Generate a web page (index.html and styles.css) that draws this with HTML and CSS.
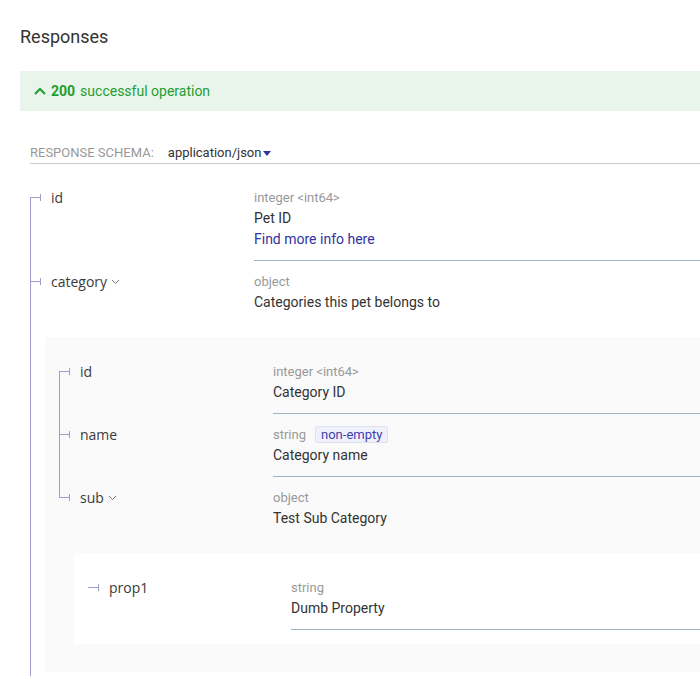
FILE: index.html
```html
<!DOCTYPE html>
<html lang="en">
<head>
<meta charset="utf-8">
<title>Responses</title>
<link rel="stylesheet" href="styles.css">
</head>
<body>
<div class="page">
  <h2 class="title">Responses</h2>
  <div class="response-ok">
    <svg class="up" width="12" height="8" viewBox="0 0 12 8"><path d="M1 7 L6 2 L11 7" fill="none" stroke="currentColor" stroke-width="2"/></svg>
    <strong>200</strong><span class="resp-desc">successful operation</span>
  </div>
  <div class="schema-bar">
    <span class="schema-label">Response Schema:</span>
    <span class="schema-type">application/json</span>
    <svg class="caret" width="8" height="5" viewBox="0 0 8 5"><path d="M0 0 H8 L4 5 Z" fill="#32329f"/></svg>
  </div>

  <div class="tree lvl0">
    <div class="prop first">
      <div class="name"><div class="nline"><span class="bullet"></span><span class="pname">id</span></div></div>
      <div class="detail bordered">
        <div class="type">integer &lt;int64&gt;</div>
        <div class="desc">Pet ID</div>
        <div class="desc"><a class="link" href="#">Find more info here</a></div>
      </div>
    </div>
    <div class="prop">
      <div class="name"><div class="nline"><span class="bullet"></span><span class="pname">category</span><svg class="chev" width="9" height="6" viewBox="0 0 9 6"><path d="M1 1 L4.5 4.5 L8 1" fill="none" stroke="#777" stroke-width="1"/></svg></div></div>
      <div class="detail">
        <div class="type">object</div>
        <div class="desc">Categories this pet belongs to</div>
      </div>
    </div>
    <div class="nest-row line">
      <div class="nest-box grey">
        <div class="tree lvl1">
          <div class="prop first">
            <div class="name"><div class="nline"><span class="bullet"></span><span class="pname">id</span></div></div>
            <div class="detail bordered">
              <div class="type">integer &lt;int64&gt;</div>
              <div class="desc">Category ID</div>
            </div>
          </div>
          <div class="prop">
            <div class="name"><div class="nline"><span class="bullet"></span><span class="pname">name</span></div></div>
            <div class="detail bordered">
              <div class="type">string <span class="badge">non-empty</span></div>
              <div class="desc">Category name</div>
            </div>
          </div>
          <div class="prop last">
            <div class="name"><div class="nline"><span class="bullet"></span><span class="pname">sub</span><svg class="chev" width="9" height="6" viewBox="0 0 9 6"><path d="M1 1 L4.5 4.5 L8 1" fill="none" stroke="#777" stroke-width="1"/></svg></div></div>
            <div class="detail">
              <div class="type">object</div>
              <div class="desc">Test Sub Category</div>
            </div>
          </div>
          <div class="nest-row">
            <div class="nest-box white">
              <div class="tree lvl2">
                <div class="prop only">
                  <div class="name"><div class="nline"><span class="bullet"></span><span class="pname">prop1</span></div></div>
                  <div class="detail bordered">
                    <div class="type">string</div>
                    <div class="desc">Dumb Property</div>
                  </div>
                </div>
              </div>
            </div>
          </div>
        </div>
      </div>
    </div>
  </div>
</div>
</body>
</html>
```

FILE: styles.css
```css
html, body {
  margin: 0;
  padding: 0;
  background: #ffffff;
  overflow: hidden;
}
body {
  font-family: Roboto, "Liberation Sans", sans-serif;
  color: #333333;
  font-size: 14px;
}
.page {
  padding: 26px 0 0 20px;
  width: 680px;
}
.title {
  margin: 0;
  font-size: 18px;
  line-height: 22px;
  font-weight: 400;
  color: #333333;
}
.response-ok {
  margin-top: 23px;
  background: #e9f5ea;
  color: #1f9d31;
  padding: 10px 14px;
  line-height: 20px;
  font-size: 14px;
  display: flex;
  align-items: center;
}
.response-ok .up {
  margin-right: 5px;
}
.response-ok strong {
  font-weight: 700;
  margin-right: 5px;
}
.schema-bar {
  margin: 32px 0 0 10px;
  line-height: 20px;
  border-bottom: 1px solid #cccccc;
  display: flex;
  align-items: center;
}
.schema-label {
  font-size: 13px;
  text-transform: uppercase;
  color: #999999;
  margin-right: 14px;
}
.schema-type {
  font-size: 13px;
  color: #333333;
}
.caret {
  margin-left: 2px;
}
.tree.lvl0 {
  margin: 13px 0 0 10px;
}
.prop {
  display: flex;
}
.name {
  padding: 10px 10px 10px 0;
  background-image: linear-gradient(#9e9ecc, #9e9ecc);
  background-repeat: no-repeat;
  background-size: 1px 100%;
  background-position: 0 0;
  flex: none;
}
.prop.first .name {
  background-size: 1px calc(100% - 20px);
  background-position: 0 20px;
}
.prop.last .name {
  background-size: 1px 21px;
}
.prop.only .name {
  background-image: none;
}
.nline {
  height: 21px;
  display: flex;
  align-items: center;
}
.lvl0 .name { width: 214px; }
.lvl1 .name { width: 204px; }
.lvl2 .name { width: 193px; }
.bullet {
  display: inline-flex;
  align-items: center;
  width: 11px;
  height: 7px;
  margin-right: 10px;
  flex: none;
}
.bullet::before {
  content: "";
  display: block;
  width: 10px;
  height: 1px;
  background: #9e9ecc;
}
.bullet::after {
  content: "";
  display: block;
  width: 1px;
  height: 7px;
  background: #9e9ecc;
}
.pname {
  font-family: "Open Sans", "DejaVu Sans", sans-serif;
  font-size: 14px;
  color: #3a3a3a;
}
.chev {
  margin-left: 4px;
  margin-top: 1px;
}
.detail {
  flex: 1;
  padding: 10px 0;
  min-width: 0;
}
.detail.bordered {
  border-bottom: 1px solid #9fb4be;
}
.type {
  font-size: 13px;
  line-height: 21px;
  color: #999999;
  display: flex;
  align-items: center;
}
.desc {
  font-size: 14px;
  line-height: 21px;
  color: #333333;
}
.link {
  color: #32329f;
  text-decoration: none;
}
.badge {
  margin-left: 9px;
  padding: 0 5px;
  line-height: 15px;
  font-size: 13px;
  color: #4040b0;
  background: #f0f0fb;
  border: 1px solid #e0e0f3;
  border-radius: 2px;
}
.nest-row {
  padding: 14px 0 14px 15px;
}
.nest-row.line {
  background-image: linear-gradient(#9e9ecc, #9e9ecc);
  background-repeat: no-repeat;
  background-size: 1px 100%;
  background-position: 0 0;
}
.nest-box {
  padding: 14px 0 14px 14px;
}
.nest-box.grey {
  background: #fafafa;
}
.nest-box.white {
  background: #ffffff;
}
```
